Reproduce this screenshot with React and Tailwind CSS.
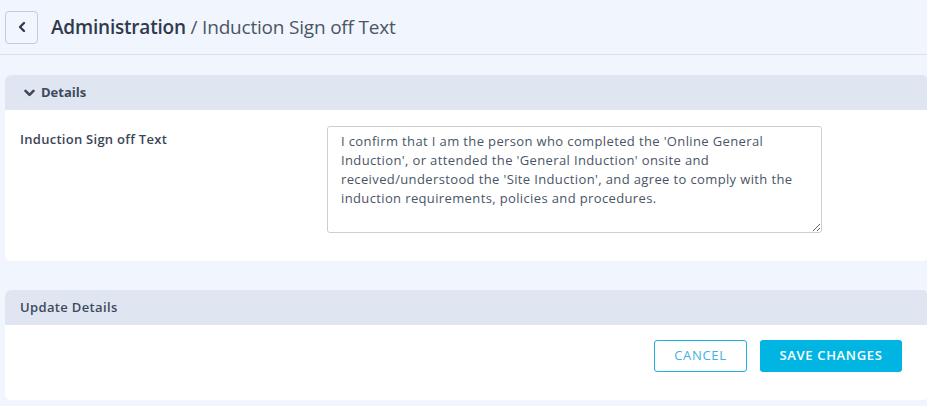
import { ChevronLeft } from 'lucide-react';

const font = { fontFamily: '"Open Sans", "Noto Sans", sans-serif' };

const App = () => {
  return (
    <div className="min-h-screen w-full bg-[#f1f5fd] text-[#3b4658] overflow-hidden" style={font}>
      {/* Header */}
      <div className="flex items-center h-[55px] pl-[5px] border-b border-[#dcdfe6]">
        <button
          type="button"
          className="w-[33px] h-[33px] flex items-center justify-center rounded-[4px] border border-[#c3cad9] text-[#2e3a4f]"
        >
          <ChevronLeft className="w-4 h-4" strokeWidth={3.5} />
        </button>
        <h1 className="ml-[13px] text-[19px] tracking-[-0.2px] leading-none">
          <span className="font-semibold text-[#2f3a4c]">Administration</span>
          <span className="text-[#4a5566]"> / Induction Sign off Text</span>
        </h1>
      </div>

      {/* Details panel */}
      <div className="mt-[20px] ml-[5px] rounded-l-[6px] rounded-r-[4px] overflow-hidden bg-white">
        <div className="h-[35px] flex items-center pl-[19px] bg-[#e0e6f1] text-[13px] font-bold text-[#3d4a5c]">
          <svg className="w-[11px] h-[8px] mr-[6px]" viewBox="0 0 11 8" fill="none">
            <path d="M1.5 1.8 L5.5 5.8 L9.5 1.8" stroke="currentColor" strokeWidth="2.6" strokeLinecap="round" strokeLinejoin="round" />
          </svg>
          Details
        </div>
        <div className="flex pt-[16px] pb-[28px] pl-[15px]">
          <div className="w-[307px] pt-[4px] text-[13px] font-semibold tracking-[0.27px] text-[#3b4658]">
            Induction Sign off Text
          </div>
          <textarea
            className="w-[495px] h-[107px] rounded-[3px] border border-[#c9ced8] px-[13px] py-[5px] text-[13px] leading-[19px] tracking-[0.37px] text-[#4a5566] outline-none resize-y"
            defaultValue="I confirm that I am the person who completed the 'Online General Induction', or attended the 'General Induction' onsite and received/understood the 'Site Induction', and agree to comply with the induction requirements, policies and procedures."
          />
        </div>
      </div>

      {/* Update Details panel */}
      <div className="mt-[29px] ml-[5px] rounded-l-[6px] rounded-r-[4px] overflow-hidden bg-white">
        <div className="h-[35px] flex items-center pl-[15px] bg-[#e0e6f1] text-[13px] font-semibold tracking-[0.35px] text-[#3d4a5c]">
          Update Details
        </div>
        <div className="flex justify-end gap-[13px] pt-[15px] pb-[28px] pr-[25px]">
          <button
            type="button"
            className="w-[93px] h-[32px] rounded-[3px] border border-[#1ab3e0] text-[13px] tracking-[0.7px] text-[#3fb3e0] bg-white"
          >
            CANCEL
          </button>
          <button
            type="button"
            className="w-[142px] h-[32px] rounded-[3px] bg-[#00b5e2] text-[13px] font-semibold tracking-[0.65px] text-white"
          >
            SAVE CHANGES
          </button>
        </div>
      </div>
    </div>
  );
};

export default App;
